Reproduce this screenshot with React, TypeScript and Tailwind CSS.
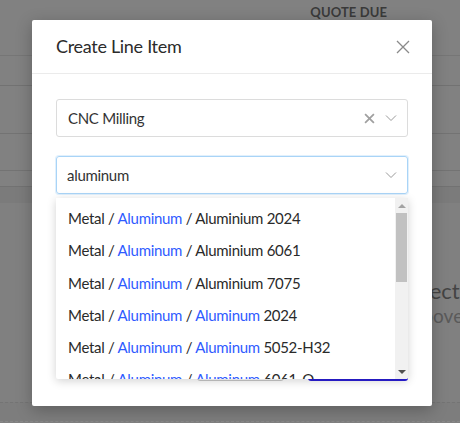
import React from 'react';

const options = [
  { parts: ['Metal', 'Aluminum', 'Aluminium'], hl: [false, true, false], tail: '2024' },
  { parts: ['Metal', 'Aluminum', 'Aluminium'], hl: [false, true, false], tail: '6061' },
  { parts: ['Metal', 'Aluminum', 'Aluminium'], hl: [false, true, false], tail: '7075' },
  { parts: ['Metal', 'Aluminum', 'Aluminum'], hl: [false, true, true], tail: '2024' },
  { parts: ['Metal', 'Aluminum', 'Aluminum'], hl: [false, true, true], tail: '5052-H32' },
  { parts: ['Metal', 'Aluminum', 'Aluminum'], hl: [false, true, true], tail: '6061-O' },
];

const Chevron = () => (
  <svg width="12" height="8" viewBox="0 0 12 8" fill="none" stroke="#9a9a9a" strokeWidth="1">
    <path d="M1 1.5 L6 6.5 L11 1.5" />
  </svg>
);

const App = () => {
  return (
    <div className="relative w-[460px] h-[423px] overflow-hidden bg-[#818181]" style={{ fontFamily: 'Lato, "Liberation Sans", sans-serif' }}>
      {/* dimmed page behind the modal */}
      <div className="h-[55px] flex justify-end pr-[73px] pt-[3px]">
        <span className="text-[13px] font-bold text-[#3a3a3a] tracking-[0.1px]">QUOTE DUE</span>
      </div>
      <div className="h-[30px] border-t border-[#767676]" />
      <div className="h-[48px] border-t border-[#727272]" />
      <div className="h-[37px] border-t border-[#737373]" />
      <div className="h-[16px] border-t border-[#737373]" />
      <div className="h-[17px] border-t border-[#727272] bg-[#7b7b7b]" />
      <div className="h-[199px] bg-[#808080] pt-[74px] whitespace-nowrap">
        <div className="pl-[401px] text-[22px] leading-[28px] text-[#444]">Select a process</div>
        <div className="pl-[413px] text-[19px] leading-[22px] text-[#5a5a5a]">above</div>
      </div>
      <div className="h-[20px] border-t border-[#747474] bg-[#7d7d7d] border-b border-dashed border-b-[#888]" />

      {/* modal */}
      <div className="absolute left-[32px] top-[20px] w-[400px] h-[386px] bg-white rounded-[2px] shadow-[0_4px_16px_rgba(0,0,0,0.25)] tracking-[-0.3px]">
        <div className="h-[54px] flex items-center justify-between pl-6 pr-[22px] border-b border-[#ebebeb]">
          <h2 className="text-[18px] text-[#2b2b2b]">Create Line Item</h2>
          <svg width="14" height="14" viewBox="0 0 14 14" stroke="#8a8a8a" strokeWidth="1.3">
            <path d="M1 1 L13 13 M13 1 L1 13" />
          </svg>
        </div>

        <div className="relative px-6 pt-[25px]">
          <div className="h-[38px] flex items-center border border-[#dcdcdc] rounded-[3px] pl-[11px] pr-[10px]">
            <span className="flex-1 text-[15px] text-[#333]">CNC Milling</span>
            <svg width="11" height="11" viewBox="0 0 10 10" stroke="#a0a0a0" strokeWidth="1.6" className="mr-[10px]">
              <path d="M1 1 L9 9 M9 1 L1 9" />
            </svg>
            <Chevron />
          </div>

          <div className="mt-[19px] h-[38px] flex items-center border border-[#a9d4f7] rounded-[3px] pl-[10px] pr-[10px] shadow-[0_0_0_1px_rgba(170,212,247,0.35)]">
            <span className="flex-1 text-[15px] text-[#333]">aluminum</span>
            <Chevron />
          </div>

          <div className="mt-[149px] flex justify-end gap-6">
            <div className="w-[87px] h-[38px] border border-[#c8c8c8] rounded-[3px]" />
            <div className="w-[100px] h-[38px] bg-[#2a1ed8] rounded-[3px]" />
          </div>

          {/* dropdown menu */}
          <div className="absolute left-6 right-6 top-[124px] h-[181px] bg-white flex shadow-[0_2px_10px_rgba(0,0,0,0.18)] rounded-b-[2px] overflow-hidden">
            <div className="flex-1 pt-[4px] pl-3 overflow-hidden">
              {options.map((o, i) => (
                <div key={i} className="h-[32.3px] leading-[32px] text-[15px] text-[#2a2a2a] whitespace-nowrap">
                  {o.parts.map((p, j) => (
                    <React.Fragment key={j}>
                      {j > 0 && ' / '}
                      <span className={o.hl[j] ? 'text-[#2f5bff]' : ''}>{p}</span>
                    </React.Fragment>
                  ))}
                  {' ' + o.tail}
                </div>
              ))}
            </div>
            <div className="w-[13px] bg-[#f1f1f1] flex flex-col items-center">
              <div className="h-[15px] flex items-center justify-center">
                <div className="w-0 h-0 border-l-[4px] border-r-[4px] border-b-[4px] border-l-transparent border-r-transparent border-b-[#a3a3a3]" />
              </div>
              <div className="w-[11px] h-[69px] bg-[#c1c1c1]" />
              <div className="flex-1" />
              <div className="h-[15px] flex items-center justify-center">
                <div className="w-0 h-0 border-l-[4px] border-r-[4px] border-t-[4px] border-l-transparent border-r-transparent border-t-[#505050]" />
              </div>
            </div>
          </div>
        </div>
      </div>
    </div>
  );
};

export default App;
